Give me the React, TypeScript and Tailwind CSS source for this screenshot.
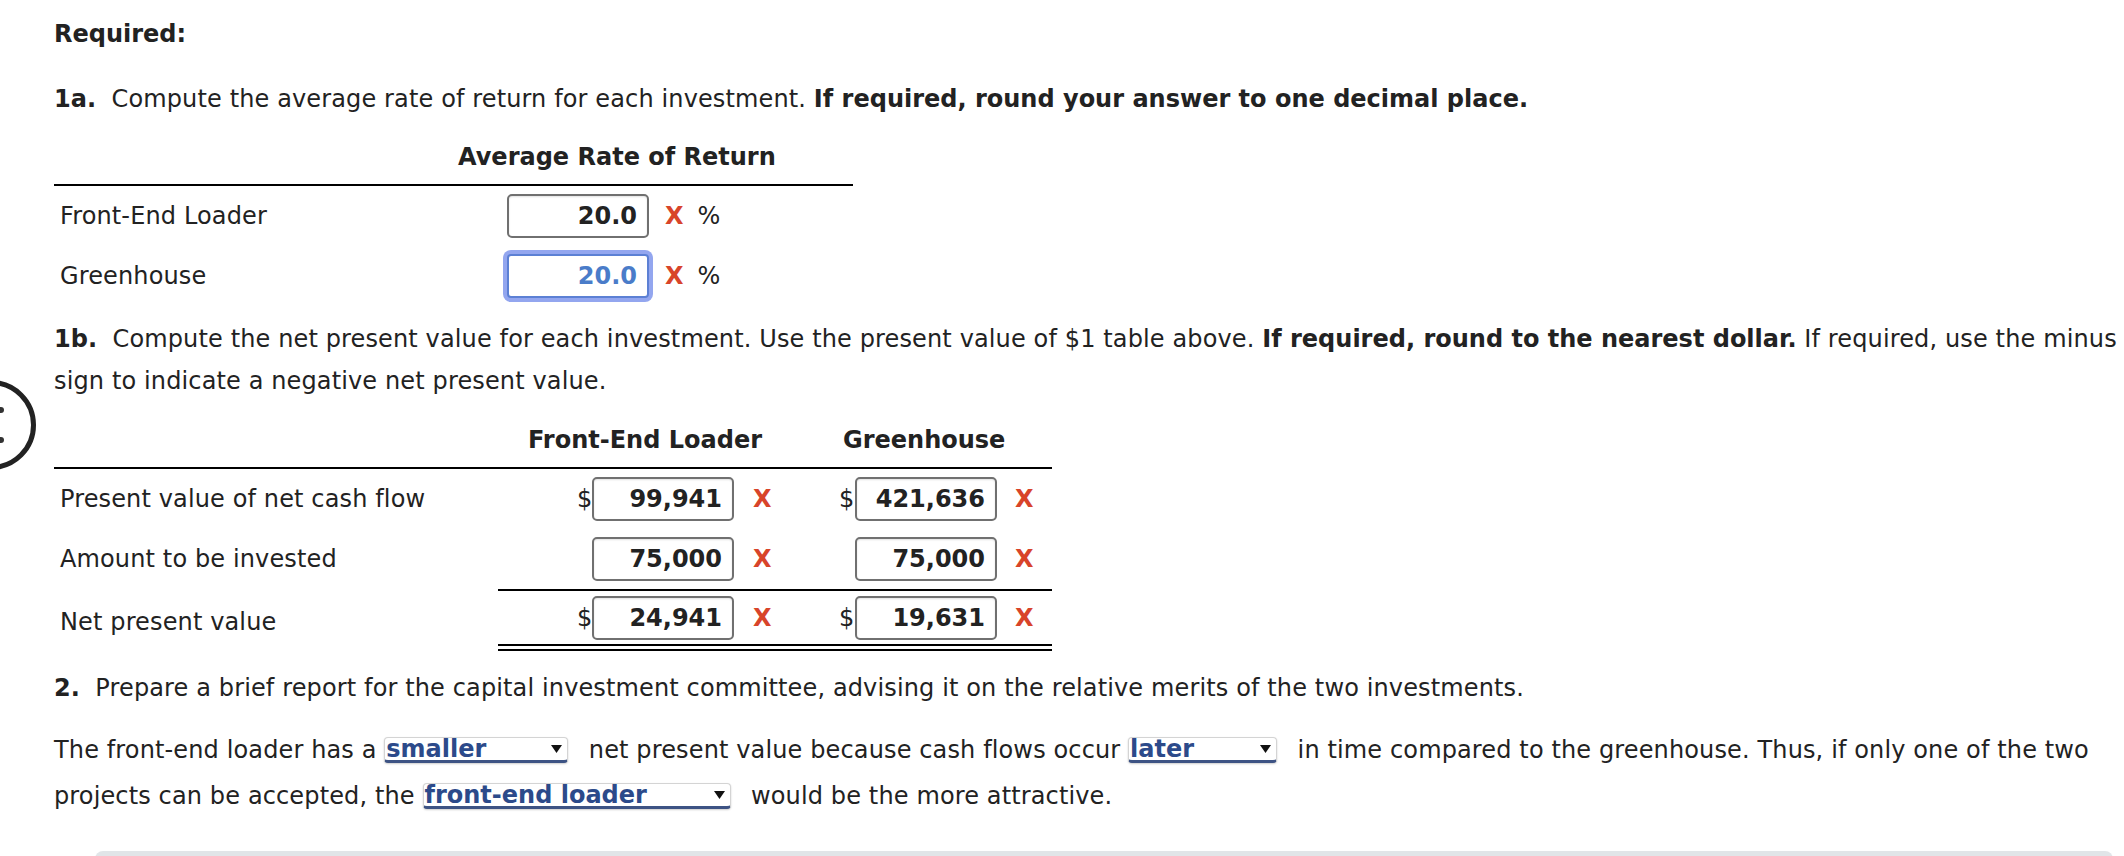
import React from "react";

function B({ children }: { children: React.ReactNode }) {
  return <b className="font-bold tracking-normal">{children}</b>;
}

function Box({ value, focused = false }: { value: string; focused?: boolean }) {
  if (focused) {
    return (
      <div className="-m-[4px] rounded-[8px] bg-[#93a6ef] p-[4px]">
        <div className="flex h-[44px] w-[142px] items-center justify-end rounded-[4px] border-[2px] border-[#5c80d4] bg-white pr-[10px] font-bold leading-none tracking-normal text-[#4a7cc9]">
          {value}
        </div>
      </div>
    );
  }
  return (
    <div className="flex h-[44px] w-[142px] items-center justify-end rounded-[5px] border-[2px] border-[#707070] bg-white pr-[10px] font-bold leading-none tracking-normal shadow-[inset_0_1px_2px_rgba(0,0,0,0.12)]">
      {value}
    </div>
  );
}

function Mark() {
  return <span className="font-bold leading-none tracking-normal text-[#d8442a]">X</span>;
}

function Sel({ value, w }: { value: string; w: string }) {
  return (
    <span
      className={`mr-[5px] inline-flex h-[26px] ${w} -translate-y-[1px] items-center justify-between rounded-[4px] border border-[#d4d4d4] border-b-[3px] border-b-[#3d5384] bg-white pl-[1px] pr-[5px] align-middle shadow-[0_1px_2px_rgba(0,0,0,0.2)]`}
    >
      <span className="font-bold leading-none tracking-normal text-[#2c4a8a]">{value}</span>
      <svg width="11" height="8" viewBox="0 0 11 8">
        <path d="M0 0 H11 L5.5 8 Z" fill="#111" />
      </svg>
    </span>
  );
}

export default function App() {
  const rows = [
    { label: "Present value of net cash flow", a: "99,941", b: "421,636", dollar: true, last: false },
    { label: "Amount to be invested", a: "75,000", b: "75,000", dollar: false, last: false },
    { label: "Net present value", a: "24,941", b: "19,631", dollar: true, last: true },
  ];
  return (
    <div className="relative min-h-[856px] overflow-hidden bg-white font-['DejaVu_Sans',Verdana,sans-serif] text-[24px] leading-[42px] tracking-[0.13px] text-[#222]">
      <svg className="absolute left-0 top-[375px]" width="45" height="100" viewBox="0 0 45 100">
        <circle cx="-9" cy="50" r="42.5" fill="none" stroke="#222" strokeWidth="5" />
        <circle cx="1" cy="35" r="3" fill="#333" />
        <circle cx="1" cy="65" r="3" fill="#333" />
      </svg>

      <div className="pl-[54px] pr-0 pt-[13px]">
        <div className="font-bold tracking-normal">Required:</div>

        <p className="mt-[23px]">
          <B>1a.</B>&nbsp; Compute the average rate of return for each investment.{" "}
          <B>If required, round your answer to one decimal place.</B>
        </p>

        {/* Table 1 */}
        <div className="mt-[16px] w-[799px]">
          <div className="grid grid-cols-[404px_314px_81px] border-b-[2px] border-black pb-[6px]">
            <div />
            <div className="whitespace-nowrap text-center font-bold tracking-normal">Average Rate of Return</div>
            <div />
          </div>
          <div className="grid h-[60px] grid-cols-[404px_395px] items-center">
            <div className="pl-[6px]">Front-End Loader</div>
            <div className="flex items-center pl-[49px]">
              <Box value="20.0" />
              <span className="ml-[16px]">
                <Mark />
              </span>
              <span className="ml-[14px]">%</span>
            </div>
          </div>
          <div className="grid h-[60px] grid-cols-[404px_395px] items-center">
            <div className="pl-[6px]">Greenhouse</div>
            <div className="flex items-center pl-[49px]">
              <Box value="20.0" focused />
              <span className="ml-[16px]">
                <Mark />
              </span>
              <span className="ml-[14px]">%</span>
            </div>
          </div>
        </div>

        <p className="mt-[12px]">
          <B>1b.</B>&nbsp; Compute the net present value for each investment. Use the present value of $1 table above.{" "}
          <B>If required, round to the nearest dollar.</B> If required, use the minus sign to indicate a negative net
          present value.
        </p>

        {/* Table 2 */}
        <div className="mt-[17px] w-[998px]">
          <div className="grid grid-cols-[444px_277px_277px] border-b-[2px] border-black pb-[6px] font-bold tracking-normal">
            <div />
            <div className="whitespace-nowrap pl-[30px]">Front-End Loader</div>
            <div className="whitespace-nowrap pl-[68px]">Greenhouse</div>
          </div>

          {rows.map((r) => (
            <div key={r.label} className="grid grid-cols-[444px_277px_277px] items-stretch">
              <div className={`flex items-center pl-[6px] ${r.last ? "h-[62px] pt-[4px]" : "h-[60px]"}`}>{r.label}</div>
              <div
                className={`flex items-center pl-[79px] ${
                  r.last ? "border-b-[7px] border-t-[2px] border-double border-black" : ""
                }`}
              >
                <span className={`w-[15px] ${r.dollar ? "" : "invisible"}`}>$</span>
                <Box value={r.a} />
                <span className="ml-[19px]">
                  <Mark />
                </span>
              </div>
              <div
                className={`flex items-center pl-[64px] ${
                  r.last ? "border-b-[7px] border-t-[2px] border-double border-black" : ""
                }`}
              >
                <span className={`w-[16px] ${r.dollar ? "" : "invisible"}`}>$</span>
                <Box value={r.b} />
                <span className="ml-[18px]">
                  <Mark />
                </span>
              </div>
            </div>
          ))}
        </div>

        <p className="mt-[16px]">
          <B>2.</B>&nbsp; Prepare a brief report for the capital investment committee, advising it on the relative merits
          of the two investments.
        </p>

        <p className="mt-[18px] leading-[46px]">
          The front-end loader has a <Sel value="smaller" w="w-[184px]" />
          &nbsp; net present value because cash flows occur <Sel value="later" w="w-[149px]" />
          &nbsp; in time compared to the greenhouse. Thus, if only one of the two projects can be accepted, the{" "}
          <Sel value="front-end loader" w="w-[308px]" />
          &nbsp; would be the more attractive.
        </p>
      </div>

      <div className="ml-[95px] mr-[11px] mt-[32px] h-[40px] rounded-t-[8px] bg-[#e1e5e8]" />
    </div>
  );
}
